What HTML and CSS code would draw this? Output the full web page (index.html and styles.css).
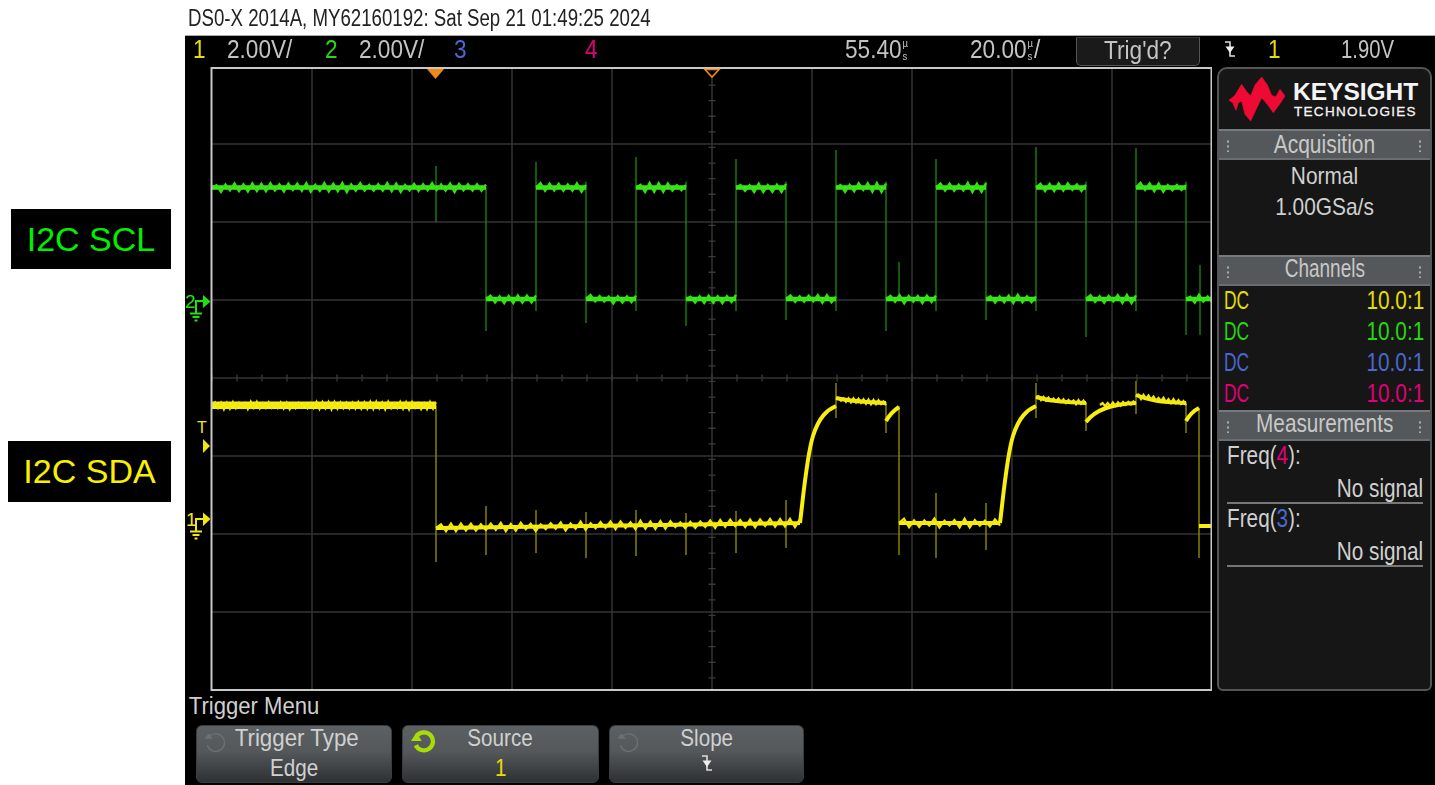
FILE: index.html
```html
<!DOCTYPE html>
<html lang="en">
<head>
<meta charset="utf-8">
<title>Oscilloscope capture</title>
<link rel="stylesheet" href="styles.css">
</head>
<body>
<div class="page">
  <aside class="labels">
    <div class="label label-scl">I2C SCL</div>
    <div class="label label-sda">I2C SDA</div>
  </aside>
  <main class="capture">
    <div class="title-row"><h1 class="title">DS0-X 2014A, MY62160192: Sat Sep 21 01:49:25 2024</h1></div>
    <section class="scope">
      <header class="status">
        <span class="ch1">1</span><span>2.00V/</span>
        <span class="ch2">2</span><span>2.00V/</span>
        <span class="ch3">3</span><span class="ch4">4</span>
        <span class="time">55.40<span class="unit"><i>µ</i><i>s</i></span></span>
        <span class="time">20.00<span class="unit"><i>µ</i><i>s</i></span><b class="slash">/</b></span>
        <div class="trig"><span>Trig'd?</span></div>
        <svg class="edge" viewBox="0 0 12 18"><path d="M1 1.500H6V15.500H11" fill="none" stroke="#ddd" stroke-width="1.600"/><path d="M1.500 6H10.500L6 12.500Z" fill="#eee"/></svg>
        <span class="ch1">1</span><span class="level">1.90V</span>
      </header>
      <div class="body">
        <svg class="plot" viewBox="185 67 1027 624" width="1027" height="624">
          <g class="grid">
            <path d="M312 68V690M412 68V690M512 68V690M612 68V690M712 68V690M812 68V690M912 68V690M1012 68V690M1112 68V690M212 144H1212M212 222H1212M212 300H1212M212 378H1212M212 456H1212M212 534H1212M212 612H1212"/>
          </g>
          <path class="ticks-h" d="M212 378H1212"/>
          <path class="ticks-v" d="M712 68V690"/>
          <g class="green-dim"><path id="green-edges" d=""/></g>
          <path id="green-band" class="green-band" d=""/>
          <path id="green-zig" class="green-zig" d=""/>
          <g class="yellow-dim"><path id="yellow-edges" d=""/></g>
          <path id="yellow-band" class="yellow-band" d=""/>
          <path id="yellow-zig" class="yellow-zig" d=""/>
          <path class="frame" d="M211.500 68H1211.500V690H211.500Z"/>
          <path class="mark-solid" d="M427 69H444L435.500 79Z"/>
          <path class="mark-hollow" d="M705 69.500H719L712 77Z"/>
          <g class="gnd-green">
            <text x="185" y="308">2</text>
            <path class="gnd-line" d="M196 313V301H204"/>
            <path d="M203 295L210.500 301.500L203 308Z"/>
            <path class="gnd-line" d="M190 313.500H202M192.500 317H199.500M194.500 320.500H197.500"/>
          </g>
          <g class="gnd-yellow">
            <text x="186" y="526">1</text>
            <path class="gnd-line" d="M196 531V519H204"/>
            <path d="M203 512.500L210.500 519L203 526Z"/>
            <path class="gnd-line" d="M190 531.500H202M192.500 535H199.500M194.500 538.500H197.500"/>
            <text class="t-mark" x="197" y="433">T</text>
            <path d="M203 439L210 446L203 453Z"/>
          </g>
        </svg>
        <aside class="panel">
          <div class="logo">
            <svg class="wave-logo" viewBox="55 45 172 138"><path d="M57 118L75 103L95 70L110 92L122 105L135 72L155 48L172 72L185 103L197 108L210 85L225 105L212 125L190 155L172 130L155 110L143 135L122 180L105 160L95 120L85 125L78 148L68 125Z"/></svg>
            <div class="brand"><strong>KEYSIGHT</strong><span>TECHNOLOGIES</span></div>
          </div>
          <h2 class="bar"><span class="bar-acq">Acquisition</span></h2>
          <div class="acq"><p>Normal</p><p>1.00GSa/s</p></div>
          <h2 class="bar"><span class="bar-ch">Channels</span></h2>
          <div class="channels">
            <p class="ch1"><span>DC</span><span>10.0:1</span></p>
            <p class="ch2"><span>DC</span><span>10.0:1</span></p>
            <p class="ch3"><span>DC</span><span>10.0:1</span></p>
            <p class="ch4"><span>DC</span><span>10.0:1</span></p>
          </div>
          <h2 class="bar"><span class="bar-me">Measurements</span></h2>
          <div class="measure">
            <p class="m-name">Freq(<span class="ch4">4</span>):</p>
            <p class="m-val"><span>No signal</span></p>
            <p class="m-name">Freq(<span class="ch3">3</span>):</p>
            <p class="m-val"><span>No signal</span></p>
          </div>
        </aside>
      </div>
      <footer class="menu">
        <div class="menu-title">Trigger Menu</div>
        <div class="keys">
          <div class="key">
            <svg class="knob" viewBox="0 0 20 20"><path class="knob-off" d="M4 6A8 8 0 1 1 3 13"/><path class="knob-off-head" d="M0.500 7H8L4 2Z"/></svg>
            <span class="wide">Trigger Type</span><span>Edge</span>
          </div>
          <div class="key">
            <svg class="knob knob-big" viewBox="0 0 20 20"><path class="knob-on" d="M5 5.500A7.500 7.500 0 1 1 4 13.500"/><path class="knob-on-head" d="M0 10H9L4.500 3Z"/></svg>
            <span>Source</span><span class="ch1">1</span>
          </div>
          <div class="key">
            <svg class="knob" viewBox="0 0 20 20"><path class="knob-off" d="M4 6A8 8 0 1 1 3 13"/><path class="knob-off-head" d="M0.500 7H8L4 2Z"/></svg>
            <span>Slope</span>
            <svg class="edge" viewBox="0 0 12 18"><path d="M1 1.500H6V15.500H11" fill="none" stroke="#ddd" stroke-width="1.600"/><path d="M1.500 6H10.500L6 12.500Z" fill="#eee"/></svg>
          </div>
        </div>
      </footer>
    </section>
  </main>
</div>
<script src="wave.js"></script>
</body>
</html>
```
FILE: styles.css
```css
* { box-sizing: border-box; }
html, body { margin: 0; padding: 0; background: #fff; }
body { font-family: "Liberation Sans", Arial, sans-serif; overflow: hidden; }
p, h1, h2 { margin: 0; font-weight: normal; }

.page { display: flex; width: 1435px; height: 785px; }

.labels { width: 185px; flex: none; padding: 209px 14px 0 0; display: flex; flex-direction: column; align-items: flex-end; gap: 172px; }
.label { background: #000; font-size: 34px; display: flex; align-items: center; justify-content: center; }
.label-scl { width: 160px; height: 60px; color: #00f000; }
.label-sda { width: 163px; height: 61px; color: #f8f000; }

.capture { width: 1250px; flex: none; display: flex; flex-direction: column; }
.title-row { height: 36px; flex: none; padding: 5px 0 0 3px; border-bottom: 1px solid #aaa; }
.title { font-size: 23.500px; line-height: 27px; color: #222; white-space: nowrap; transform: scaleX(.794); transform-origin: left; filter: blur(.35px); }

.scope { flex: 1; background: #000; display: flex; flex-direction: column; color: #c4c4c4; filter: blur(.4px); }

.status { height: 31px; flex: none; display: grid; grid-template-columns: 34px 98px 34px 95px 131px 260px 125px 106px 148px 44px 73px 1fr; padding-left: 8px; font-size: 26px; line-height: 26px; }
.status > span { white-space: nowrap; transform: scaleX(.87); transform-origin: left; }
.status > .level { transform: scaleX(.78); }
.time { display: inline-flex; align-items: center; height: 26px; }
.unit { display: inline-flex; flex-direction: column; font-size: 11px; line-height: 13px; margin: 1px 0 0 1px; }
.unit i { font-style: normal; }
.slash { font-weight: normal; margin-left: 1px; }
.trig { width: 124px; height: 29px; margin-top: 1px; background: #1a1a1a; border: 1px solid #555; border-top-color: #333; border-radius: 0 0 5px 5px; text-align: center; line-height: 25px; }
.trig span { display: inline-block; transform: scaleX(.87); }
.edge { width: 12px; height: 19px; display: block; margin-top: 4px; }

.ch1 { color: #e6de00; }
.ch2 { color: #25d810; }
.ch3 { color: #4a68d0; }
.ch4 { color: #e00078; }

.body { display: flex; height: 624px; flex: none; }
.plot { display: block; flex: none; }
.grid path { fill: none; stroke: #333; stroke-width: 1.500; }
.ticks-h { fill: none; stroke: #3a3a3a; stroke-width: 7; stroke-dasharray: 1.300 23.700; stroke-dashoffset: 0.650; }
.ticks-v { fill: none; stroke: #3a3a3a; stroke-width: 7; stroke-dasharray: 1.300 14.300; stroke-dashoffset: -0.800; }
.frame { fill: none; stroke: #c8c8c8; stroke-width: 2; }
.mark-solid { fill: #f08a14; }
.mark-hollow { fill: #000; stroke: #f08a14; stroke-width: 1.600; }

.green-dim path { fill: none; stroke: #1b8a10; stroke-width: 1.300; }
.green-band { fill: none; stroke: #3ee81c; stroke-width: 4.500; }
.green-zig { fill: none; stroke: #35e015; stroke-width: 2.400; }
.yellow-dim path { fill: none; stroke: #8f8a05; stroke-width: 1.400; }
.yellow-band { fill: none; stroke: #f8ee10; stroke-width: 4; }
.yellow-zig { fill: none; stroke: #f2e810; stroke-width: 2.200; }

.gnd-green { fill: #22e010; stroke: none; font-size: 19px; }
.gnd-yellow { fill: #f0e810; stroke: none; font-size: 19px; }
.gnd-line { fill: none; stroke-width: 2; }
.gnd-green .gnd-line { stroke: #22e010; }
.gnd-yellow .gnd-line { stroke: #f0e810; }
.t-mark { font-size: 16px; }

.panel { width: 215px; margin-left: 5px; flex: none; background: #161616; border: 2px solid #555; border-radius: 10px 10px 6px 6px; display: flex; flex-direction: column; }
.logo { height: 60px; flex: none; display: flex; align-items: center; padding: 0 0 0 9px; gap: 7px; }
.wave-logo { width: 58px; height: 46px; flex: none; }
.wave-logo path { fill: #ee0a33; stroke: #ee0a33; stroke-width: 2; stroke-linejoin: round; }
.brand { display: flex; flex-direction: column; color: #f4f4f4; line-height: 1; }
.brand strong { font-size: 24.500px; line-height: 24px; font-weight: bold; }
.brand span { font-size: 13.500px; line-height: 15px; letter-spacing: 1.300px; margin-left: 1px; -webkit-text-stroke: .3px #f4f4f4; }

.bar { height: 31px; flex: none; background: #54585a; border-top: 2px solid #767a7c; border-bottom: 2px solid #6a6e70; font-size: 25px; line-height: 25px; text-align: center; color: #c8c8c8; position: relative; }
.bar span { display: inline-block; }
.bar-acq { transform: scaleX(.84) translateY(1px); }
.bar-ch { transform: scaleX(.76) translateY(-1px); }
.bar-me { transform: scaleX(.83) translateY(-1px); }
.bar::before, .bar::after { content: ""; position: absolute; top: 8px; width: 8px; height: 13px; background: radial-gradient(circle, #a8a8a8 1px, transparent 1.300px) 0 0 / 6px 5px; }
.bar::before { left: 6px; }
.bar::after { right: 5px; }

.acq { height: 95px; flex: none; text-align: center; font-size: 24px; line-height: 31px; color: #d0d0d0; }
.acq p { transform: scaleX(.87); }

.channels { height: 124px; flex: none; padding: 0 6px 0 5px; font-size: 26px; line-height: 31px; }
.channels p { display: flex; justify-content: space-between; margin-top: -1px; height: 32px; }
.channels span:first-child { transform: scaleX(.67); transform-origin: left; }
.channels span:last-child { transform: scaleX(.8); transform-origin: right; }

.measure { padding: 0 7px 0 8px; font-size: 25px; color: #d0d0d0; }
.m-name { height: 31px; line-height: 28px; transform: scaleX(.83); transform-origin: left; }
.m-val { height: 32px; line-height: 32px; text-align: right; border-bottom: 2px solid #777; }
.m-val span { display: inline-block; transform: scaleX(.83); transform-origin: right; }

.menu { flex: 1; display: flex; flex-direction: column; }
.menu-title { height: 34px; padding: 3px 0 0 4px; font-size: 23.500px; line-height: 24px; color: #cfcfcf; transform: scaleX(.94); transform-origin: left; }
.keys { display: grid; grid-template-columns: 196px 197px 195px; gap: 10px; padding-left: 11px; }
.key { position: relative; height: 58px; border-radius: 6px; background: linear-gradient(#5c6062, #54585a 45%, #2e3133); border: 1px solid #3a3d3f; display: flex; flex-direction: column; align-items: center; font-size: 24px; line-height: 29px; color: #d0d0d0; }
.key span { height: 29px; margin-top: -3px; transform: scaleX(.86); }
.key span + span { margin-top: 1px; }
.key .wide { transform: scaleX(.93); margin-left: 6px; }
.key .edge { margin-top: 2px; }
.knob { position: absolute; left: 7px; top: 5px; width: 22px; height: 22px; }
.knob-big { width: 26px; height: 24px; left: 7px; top: 3px; }
.knob-off { fill: none; stroke: #6d7072; stroke-width: 1.200; }
.knob-off-head { fill: #6d7072; }
.knob-on { fill: none; stroke: #a8dc08; stroke-width: 3.600; }
.knob-on-head { fill: #a8dc08; }
```
FILE: wave.js
```js
(function () {
  var seed = 7;
  function rnd() { seed = (seed * 16807) % 2147483647; return seed / 2147483647; }
  function set(id, d) { document.getElementById(id).setAttribute('d', d); }

  function zig(x0, x1, y0, y1, amp, period) {
    var d = 'M' + x0 + ' ' + y0, n = Math.max(2, Math.round((x1 - x0) / (period / 2))), i;
    for (i = 1; i <= n; i++) {
      var t = i / n, a = amp * (0.6 + rnd() * 0.6) * (i % 2 ? -1 : 1);
      d += 'L' + (x0 + (x1 - x0) * t).toFixed(1) + ' ' + (y0 + (y1 - y0) * t + a).toFixed(1);
    }
    return d;
  }

  /* SCL, green */
  var hi = 187.5, lo = 299;
  var gBand = 'M212 ' + hi + 'H486', gZig = zig(212, 486, hi, hi, 3.8, 9);
  var gEdge = 'M436 166V222M486 ' + hi + 'V331';
  var tops = { 536: 162, 636: 157, 736: 159, 836: 150, 936: 159, 1036: 147, 1136: 148 };
  var bots = { 586: 323, 686: 326, 786: 320, 886: 331, 986: 320, 1086: 337, 1186: 335 };
  var x;
  for (x = 486; x < 1212; x += 100) {
    var end = Math.min(x + 50, 1212);
    gBand += 'M' + x + ' ' + lo + 'H' + end;
    gZig += zig(x, end, lo, lo, 3.6, 9);
    if (x + 50 < 1212) {
      gBand += 'M' + (x + 50) + ' ' + hi + 'H' + (x + 100);
      gZig += zig(x + 50, x + 100, hi, hi, 3.8, 9);
      gEdge += 'M' + (x + 50) + ' ' + tops[x + 50] + 'V' + (lo + 12);
      gEdge += 'M' + (x + 100) + ' ' + (hi - 6) + 'V' + (bots[x + 100] || 325);
    }
  }
  gEdge += 'M899 262V300M1200 265V335';
  set('green-band', gBand); set('green-zig', gZig); set('green-edges', gEdge);

  /* SDA, yellow */
  function low(x0, x1, y0, y1) { return { band: 'M' + x0 + ' ' + y0 + 'L' + x1 + ' ' + y1, zig: zig(x0, x1, y0, y1, 3.8, 10) }; }
  var yBand = 'M212 403.500H436M212 407H436', yZig = zig(212, 436, 405.5, 405.5, 3.2, 6);
  var seg = low(436, 800, 528, 523); yBand += seg.band; yZig += seg.zig;
  seg = low(899, 1000, 523, 523); yBand += seg.band; yZig += seg.zig;
  seg = low(1199, 1212, 526, 526); yBand += seg.band;

  function rise(x0) {
    return 'M' + x0 + ' 523C' + (x0 + 4) + ' 490 ' + (x0 + 7) + ' 455 ' + (x0 + 13) + ' 436' +
      'S' + (x0 + 27) + ' 410 ' + (x0 + 36) + ' 406';
  }
  yBand += rise(800) + rise(1000);
  yBand += 'M836 398C850 401 860 402 886 403';
  yBand += 'M886 421C890 414 893 411 899 407';
  yBand += 'M1036 397C1050 401 1060 402 1086 403';
  yBand += 'M1086 422C1095 410 1110 404 1136 403';
  yBand += 'M1136 395C1150 401 1160 402 1186 403';
  yBand += 'M1186 421C1190 414 1193 411 1199 408';
  yZig += zig(836, 886, 399, 403, 2, 5) + zig(1036, 1086, 398, 403, 2, 5) + zig(1136, 1186, 396, 403, 2, 5) + zig(1100, 1136, 405, 403, 1.6, 5);

  var yEdge = 'M436 405V562M899 406V555M1199 408V558';
  yEdge += 'M836 383V418M886 402V433M1036 383V418M1086 402V431M1136 381V414M1186 402V433';
  var sp = [[486, 506, 555], [536, 510, 553], [586, 512, 558], [636, 510, 556], [686, 513, 555], [736, 511, 553], [786, 500, 548], [936, 493, 558], [986, 503, 550]];
  sp.forEach(function (s) { yEdge += 'M' + s[0] + ' ' + s[1] + 'V' + s[2]; });
  set('yellow-band', yBand); set('yellow-zig', yZig); set('yellow-edges', yEdge);
})();
```
